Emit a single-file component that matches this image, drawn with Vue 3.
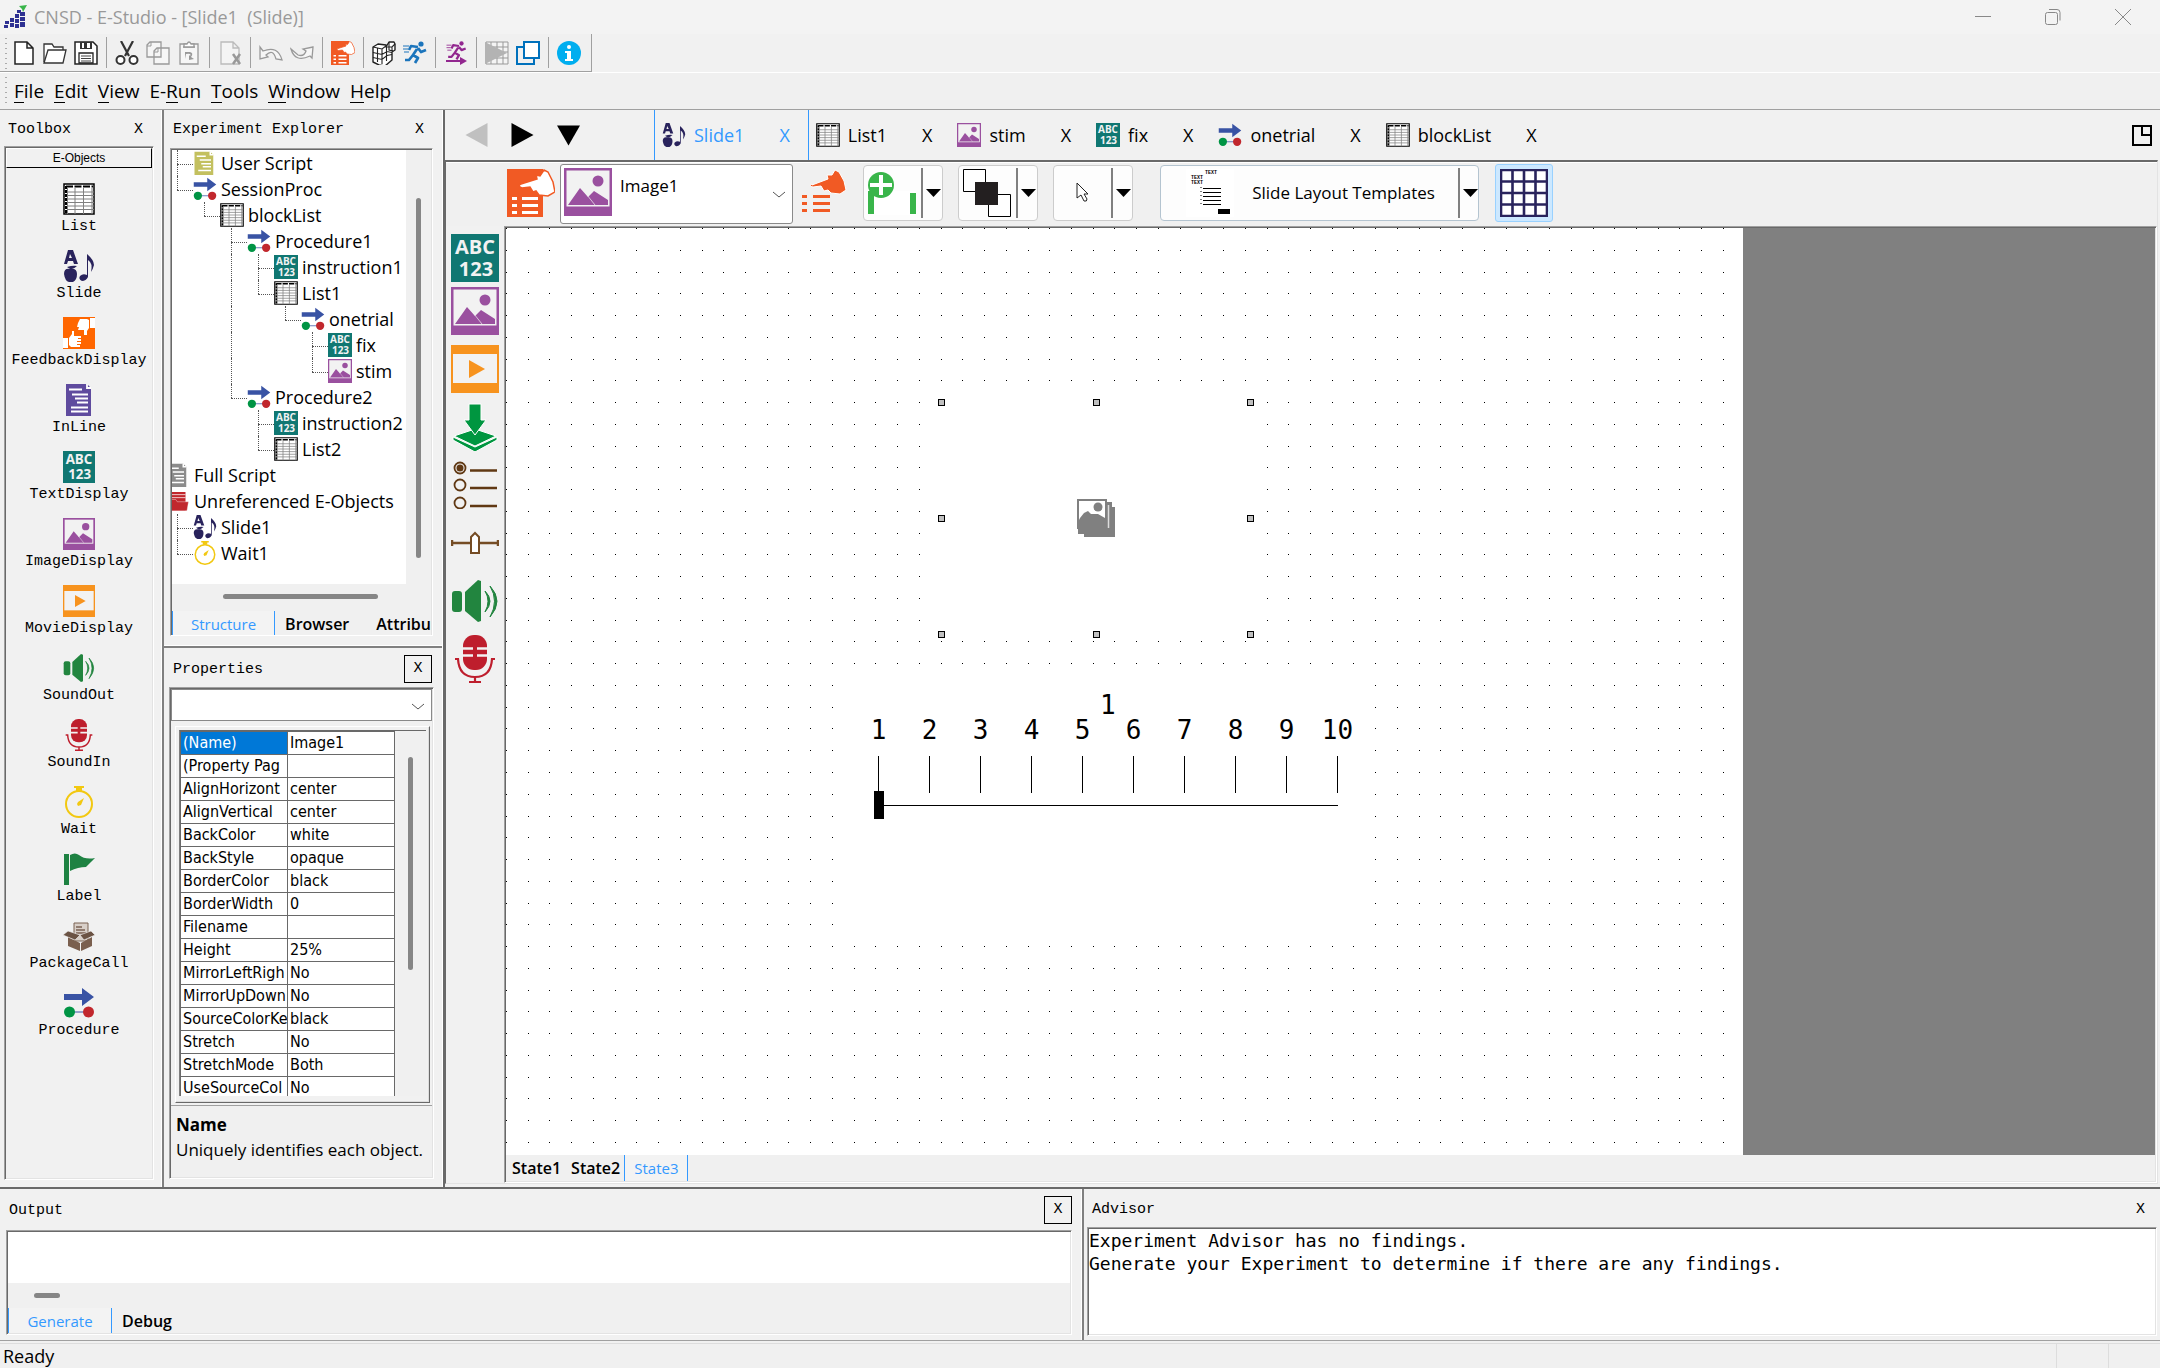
<script setup>
import { ref } from 'vue'

const toolGroups = [
  [['new', 'New'], ['open', 'Open'], ['save', 'Save']],
  [['cut', 'Cut'], ['copy', 'Copy'], ['paste', 'Paste']],
  [['delete', 'Delete']],
  [['undo', 'Undo'], ['redo', 'Redo']],
  [['props', 'Properties']],
  [['cubes', 'Generate'], ['run', 'Run']],
  [['runmode', 'Quick Run']],
  [['preview', 'Test'], ['windows', 'Windows']],
  [['info', 'About']]
]

const menus = [['', 'F', 'ile'], ['', 'E', 'dit'], ['', 'V', 'iew'], ['E-', 'R', 'un'], ['', 'T', 'ools'], ['', 'W', 'indow'], ['', 'H', 'elp']]

const toolbox = [
  ['list', 'List'], ['slide', 'Slide'], ['feedback', 'FeedbackDisplay'], ['inline', 'InLine'],
  ['text', 'TextDisplay'], ['image', 'ImageDisplay'], ['movie', 'MovieDisplay'], ['sound', 'SoundOut'],
  ['mic', 'SoundIn'], ['wait', 'Wait'], ['flag', 'Label'], ['package', 'PackageCall'], ['procedure', 'Procedure']
]

// guides: one letter per indent level (t = branch, l = last branch, v = line, - = blank)
const tree = [
  ['t', 'script', 'User Script'],
  ['l', 'procedure', 'SessionProc'],
  ['-l', 'list', 'blockList'],
  ['--t', 'procedure', 'Procedure1'],
  ['--vt', 'text', 'instruction1'],
  ['--vl', 'list', 'List1'],
  ['--v-l', 'procedure', 'onetrial'],
  ['--v--t', 'text', 'fix'],
  ['--v--l', 'image', 'stim'],
  ['--l', 'procedure', 'Procedure2'],
  ['---t', 'text', 'instruction2'],
  ['---l', 'list', 'List2'],
  ['', 'fullscript', 'Full Script'],
  ['', 'folder', 'Unreferenced E-Objects'],
  ['t', 'slide', 'Slide1'],
  ['l', 'wait', 'Wait1']
]

const properties = [
  ['(Name)', 'Image1'], ['(Property Pag', ''], ['AlignHorizont', 'center'], ['AlignVertical', 'center'],
  ['BackColor', 'white'], ['BackStyle', 'opaque'], ['BorderColor', 'black'], ['BorderWidth', '0'],
  ['Filename', ''], ['Height', '25%'], ['MirrorLeftRigh', 'No'], ['MirrorUpDown', 'No'],
  ['SourceColorKe', 'black'], ['Stretch', 'No'], ['StretchMode', 'Both'], ['UseSourceCol', 'No']
]

const tabs = [['slide', 'Slide1'], ['list', 'List1'], ['image', 'stim'], ['text', 'fix'], ['procedure', 'onetrial'], ['list', 'blockList']]
const subObjects = ['text', 'image', 'movie', 'button', 'choice', 'slider', 'sound', 'mic']
const handles = ['nw', 'n', 'ne', 'w', 'e', 'sw', 's', 'se']
const rating = ref(1)

let dots = ''
for (let r = 0; r < 70; r++) {
  for (let c = 0; c < 100; c++) {
    dots += `M${Math.round(c * 21.73)} ${Math.round(r * 21.76)}h1v1h-1z`
  }
}
</script>

<template>
  <svg class="sprite" aria-hidden="true">
    <symbol id="i-logo" viewBox="0 0 24 24">
      <g fill="#2e3192">
        <path d="M17 7h5v4h-5zM17 12h5v4h-5zM17 17h5v5h-5zM12 9h4v4h-4zM12 14h4v4h-4zM12 19h4v4h-4zM7 13h4v4H7zM7 18h4v4H7zM2 16h4v3H2zM1 20h4v3H1zM14 5h4v3h-4z" />
      </g>
      <path d="M16 1l8-1-4 7-1-3z" fill="#39b54a" />
    </symbol>
    <symbol id="i-new" viewBox="0 0 24 24"><path d="M3 1h12l6 6v16H3zM15 1v6h6" fill="#fff" stroke="#222" stroke-width="1.5" /></symbol>
    <symbol id="i-open" viewBox="0 0 24 24"><path d="M1 21V3h8l2 3h9v4" fill="#fff" stroke="#333" stroke-width="1.3" /><path d="M1 22L5 9h18l-3 13z" fill="#fff" stroke="#333" stroke-width="1.3" /></symbol>
    <symbol id="i-save" viewBox="0 0 24 24"><path d="M1 1h18l4 4v18H1z" fill="#fff" stroke="#222" stroke-width="1.5" /><path d="M6 1h12v7H6z" fill="#333" /><path d="M13 2h3v5h-3zM8 2h2v5H8z" fill="#fff" /><path d="M5 12h14v10H5z" fill="#fff" stroke="#222" stroke-width="1.3" /><path d="M7 15h10M7 17.500h10M7 20h10" stroke="#444" /></symbol>
    <symbol id="i-cut" viewBox="0 0 24 24"><path d="M6 0l8 15M18 0l-8 15" stroke="#333" stroke-width="2.2" /><g fill="#fff" stroke="#333" stroke-width="2"><circle cx="5.500" cy="19" r="4" /><circle cx="18.500" cy="19" r="4" /></g></symbol>
    <symbol id="i-copy" viewBox="0 0 24 24"><path d="M1 4l3-3h11v15H1zM8 10l3-3h12v16H8z" fill="#f6f6f6" stroke="#999" stroke-width="1.3" /><path d="M1 5h4V1M8 11h4V7" fill="none" stroke="#999" /></symbol>
    <symbol id="i-paste" viewBox="0 0 24 24"><path d="M3 3h18v20H3zM6 6h12" fill="#f6f6f6" stroke="#999" stroke-width="1.3" /><path d="M7 6V3h3q2-4 4 0h3v3z" fill="#fff" stroke="#999" stroke-width="1.3" /><path d="M8 18v-7h5q4 1 1 5l3 2-5 1 0-5 1 1q2-3-4-2z" fill="#999" /></symbol>
    <symbol id="i-delete" viewBox="0 0 24 24"><path d="M3 1h12l6 6v16H3zM15 1v6h6" fill="#f4f4f4" stroke="#bbb" stroke-width="1.3" /><path d="M15 13l7 10M22 13l-7 10" stroke="#999" stroke-width="2.500" /></symbol>
    <symbol id="i-undo" viewBox="0 0 24 24"><path d="M1 6v12l8-2-2-2q7-7 10 4l6 1Q19 4 4 10z" fill="#f6f6f6" stroke="#999" stroke-width="1.3" /></symbol>
    <symbol id="i-redo" viewBox="0 0 24 24"><path d="M23 6l-10 2 3 2q-2 6-8 4L1 8q4 14 19 7l2 2z" fill="#f6f6f6" stroke="#999" stroke-width="1.3" /></symbol>
    <symbol id="i-props" viewBox="0 0 48 48"><path d="M0 0h36v48H0z" fill="#f15a24" /><g fill="#fff"><path d="M5 28h5v3H5zM15 28h16v3H15zM5 35h5v3H5zM15 35h16v3H15zM5 42h5v3H5zM15 42h16v3H15z" /></g><path d="M14 15l16-5-1-4 4 1 4-6 4 2 5 10 2 10-7 4-9-1-3-4-3 1-3-5-8 1q-5-2-1-4z" fill="#fff" stroke="#f15a24" stroke-width="1.500" /></symbol>
    <symbol id="i-hand" viewBox="0 0 48 48"><path d="M0 26h5v3H0zM11 26h17v3H11zM0 33h5v3H0zM11 33h17v3H11zM0 40h5v3H0zM11 40h17v3H11z" fill="#f15a24" /><path d="M10 16l16-6-1-4 5 0 3-5 4 2 5 9 2 9-6 4-9-1-3-3-4 1-3-5-8 1q-5-1-1-3z" fill="#f15a24" stroke="#fff" /></symbol>
    <symbol id="i-cubes" viewBox="0 0 24 24"><path d="M1 6l5-3 8 1v2l3-5h5l1 2v6l-3 2v8l-7 6-6-1-6-3z" fill="#fff" stroke="#222" stroke-width="1.4" stroke-linejoin="round" /><path d="M1 6l9 2 4-3M10 8v15M5.500 7v14M1 11.500l9 2 5-3 5 1M1 16.500l9 2 5-4 5-1M14.500 6v14M17 1v8l4 1M15 6h5l3-3M20 6v4" fill="none" stroke="#222" stroke-width="1.100" /></symbol>
    <symbol id="i-runner" viewBox="0 0 24 24"><circle cx="18" cy="3" r="2.600" stroke="none" /><path d="M15 6L8 5 6 9M15 7l3 4 5-2M14 8l-4 6 5 3-3 5M10 14l-4 5H2" fill="none" stroke-width="2.700" stroke-linejoin="round" /><path d="M0 5h6M0 8h5M1 11h5" fill="none" stroke-width="1" /></symbol>
    <symbol id="i-run" viewBox="0 0 24 24"><use href="#i-runner" fill="#1c75bc" stroke="#1c75bc" /></symbol>
    <symbol id="i-runmode" viewBox="0 0 24 24"><use href="#i-runner" width="23" height="20" x="1" fill="#92278f" stroke="#92278f" /><path d="M2 19h14v-3l7 4-7 4v-3H2z" fill="#92278f" /></symbol>
    <symbol id="i-preview" viewBox="0 0 24 24"><path d="M1 1h22v22H1zM1 6h22M1 11h22M1 17h22M6 1v22M12 1v22M18 1v22" fill="#f4f4f4" stroke="#999" /><path d="M0 1l22 11L0 23z" fill="#b3b3b3" /></symbol>
    <symbol id="i-windows" viewBox="0 0 24 24"><path d="M8 6H1v17h17v-5" fill="none" stroke="#0071bc" stroke-width="2" /><path d="M8 1h15v16H8z" fill="#fff" stroke="#0071bc" stroke-width="2" /></symbol>
    <symbol id="i-info" viewBox="0 0 24 24"><circle cx="12" cy="12" r="12" fill="#00aeef" /><circle cx="12" cy="6" r="2" fill="#fff" /><path d="M8 10h6v8h2v2H8v-2h2v-6H8z" fill="#fff" /></symbol>

    <symbol id="i-list" viewBox="0 0 32 32"><path d="M1 1h30v30H1z" fill="#fff" stroke="#000" stroke-width="1.500" /><path d="M4 9h27M4 12.500h27M4 16h27M4 19.500h27M4 23h27M4 26.500h27M12 5v26M20.500 5v26M29 5v26M4.500 5v26" stroke="#808080" fill="none" /><path d="M3 3.500h27" stroke="#000" stroke-width="2" stroke-dasharray="7 1.500" /><path d="M3 3v27" stroke="#000" stroke-width="2" stroke-dasharray="3 1" /></symbol>
    <symbol id="i-slide" viewBox="0 0 32 32"><g fill="#29235c"><path d="M5 0h5l5 14h-4l-1-3H5l-1 3H1zM7 4L6 8h3z" fill-rule="evenodd" /><path d="M7 19q-6-1-6 5 1 7 5 8h4q4-2 4-8 0-6-7-5z" /><path d="M4 17q6-2 10-1-4 4-7 3z" /><path d="M24 4q7 6 7 11-1 4-3 7 2-9-3-12v17q-2 4-6 4-4-2-2-5 3-3 7-1z" /></g></symbol>
    <symbol id="i-feedback" viewBox="0 0 32 32"><path d="M0 0h32v32H0z" fill="#ff6600" /><g fill="#fff"><path d="M0 21h5v10H0zM6 21l3-4v-3h2v5h7v2h-3v1h3v2h-4v1h4v2h-4v1h3v2H8l-2-2zM27 1h5v10h-5zM26 11l-2 3v4h-3v-5h-6l1-3h-2l1-4 2-4h7l2 1z" /></g></symbol>
    <symbol id="i-inline" viewBox="0 0 32 32"><path d="M3 0h21l4 4v28H3z" fill="#5f4b9e" /><path d="M24 0v4h4M6 5.500h13M9 10.500h16M12 14.500h13M14 18.500h11M8 23.500h17M8 27.500h17" fill="none" stroke="#fff" stroke-width="1.800" /></symbol>
    <symbol id="i-script" viewBox="0 0 32 32"><path d="M2 1h21l4 4v27H2z" fill="#c3c05f" /><path d="M23 1v4h4M5 7h12M9 12h15M11 17h13M13 21h11M7 26h17" fill="none" stroke="#fff" stroke-width="2" /></symbol>
    <symbol id="i-fullscript" viewBox="0 0 32 32"><path d="M2 1h21l4 4v27H2z" fill="#8c8c8c" /><path d="M23 1v4h4M5 7h12M9 12h15M11 17h13M13 21h11M7 26h17" fill="none" stroke="#fff" stroke-width="2" /></symbol>
    <symbol id="i-folder" viewBox="0 0 32 32"><path d="M2 4h24v25H2z" fill="#c1272d" /><path d="M2 7.500h24M2 11.500h24" stroke="#fff" stroke-width="1" /><path d="M3 14h10l2 3h15l-2 12H3z" fill="#c1272d" stroke="#fff" stroke-width=".5" /></symbol>
    <symbol id="i-text" viewBox="0 0 48 48"><path d="M0 0h48v48H0z" fill="#107772" /><g fill="#f2f2f2" font-family="Open Sans, sans-serif" font-weight="700" font-size="20" text-anchor="middle"><text x="24" y="20">ABC</text><text x="25" y="42">123</text></g></symbol>
    <symbol id="i-image" viewBox="0 0 48 48"><path d="M0 0h48v48H0z" fill="#9a509f" /><path d="M2.500 2.500h43v36h-43z" fill="#f2f2f2" /><path d="M4 37l12-17 8 9 6-6 14 9v5z" fill="#9a509f" /><path d="M23 27l8 10" stroke="#f2f2f2" stroke-width=".7" /><circle cx="34" cy="13" r="5.500" fill="#9a509f" /></symbol>
    <symbol id="i-movie" viewBox="0 0 48 48"><path d="M0 0h48v48H0z" fill="#f7931e" /><path d="M2 9h44v29H2z" fill="#f2f2f2" /><path d="M18 15l16 9-16 9z" fill="#f7931e" /></symbol>
    <symbol id="i-button" viewBox="0 0 48 48"><g fill="#009640" stroke="#fff"><path d="M2 34v3l22 12 22-12v-3L24 44z" stroke-width="1" /><path d="M3 33l21-7 21 7-21 10z" /><path d="M18 1h12v16h5L24 32 13 17h5z" /></g></symbol>
    <symbol id="i-choice" viewBox="0 0 48 48"><g fill="none" stroke="#603813" stroke-width="1.800"><circle cx="9" cy="7" r="5.500" /><circle cx="9" cy="24" r="5.500" /><circle cx="9" cy="42" r="5.500" /><path d="M19 9.500h27M19 27h27M19 45h27" stroke-width="2.600" /></g><circle cx="9" cy="7" r="3.500" fill="#603813" /></symbol>
    <symbol id="i-slider" viewBox="0 0 48 48"><path d="M1 21v6M47 21v6M1 24h46" stroke="#754c24" stroke-width="2.500" /><path d="M20 18l4-4 4 4v16h-8z" fill="#fff" stroke="#754c24" stroke-width="2" /></symbol>
    <symbol id="i-sound" viewBox="0 0 48 48"><g fill="#22853f"><rect x="1" y="14" width="10" height="21" rx="3" /><path d="M14 15L27 3l3 1v40l-3 1-13-11z" /><path d="M34 14q10 10 0 21 6-11 0-21zM39 9q14 15 0 31 9-16 0-31z" stroke="#22853f" /></g></symbol>
    <symbol id="i-mic" viewBox="0 0 48 48"><rect x="12" y="0" width="24" height="35" rx="11" fill="#be1e2d" /><path d="M11 13.500h11M26 13.500h11M11 20.500h11M26 20.500h11" stroke="#f2f2f2" stroke-width="2.600" /><path d="M4 24h3q1 18 17 18t17-18h3M24 42v5M18 47h12" fill="none" stroke="#be1e2d" stroke-width="2.200" /></symbol>
    <symbol id="i-wait" viewBox="0 0 32 32"><circle cx="16" cy="18" r="13" fill="none" stroke="#f2c811" stroke-width="2" /><path d="M11 0h10v2h-2v3h-6V2h-2z" fill="#f2c811" /><path d="M21 12l-3 7-3 1-1-2 1-2z" fill="#f2c811" /></symbol>
    <symbol id="i-flag" viewBox="0 0 32 32"><path d="M1 1h5v31H1z" fill="#1e8242" /><path d="M7 2q5-3 9 0 6 5 16 3-6 6-9 9-8 0-16 4z" fill="#1e8242" /></symbol>
    <symbol id="i-package" viewBox="0 0 32 32"><path d="M11 3h14v18H11z" fill="#d8cfc8" stroke="#7a6253" /><path d="M13 7h6M13 10h9M13 13h10" stroke="#7a6253" stroke-width="1.300" /><path d="M5 17l12 6v8L5 26zM29 17l-11 6v8l11-5z" fill="#7a5f4e" /><path d="M5 11l-5 4 12 5 5-5zM28 11l4 4-11 5-4-5z" fill="#6b5344" stroke="#f2f2f2" stroke-width=".6" /></symbol>
    <symbol id="i-procedure" viewBox="0 0 32 32"><path d="M1 7h18V1l12 9-12 9v-6H1z" fill="#3953a4" /><path d="M8 25h16" stroke="#3953a4" /><circle cx="6.500" cy="25" r="5.500" fill="#009444" /><circle cx="25.500" cy="25" r="5.500" fill="#c1272d" /></symbol>
  </svg>

  <div class="app">
    <header class="titlebar">
      <svg class="logo"><use href="#i-logo" /></svg>
      <h1>CNSD - E-Studio - [Slide1&nbsp; (Slide)]</h1>
      <div class="winctl">
        <button aria-label="Minimize"><svg viewBox="0 0 16 16"><path d="M0 7.500h16" /></svg></button>
        <button aria-label="Restore"><svg viewBox="0 0 16 16"><rect x=".5" y="3.500" width="12" height="12" rx="2" /><path d="M4 .5h8q3 0 3 3v8" /></svg></button>
        <button aria-label="Close"><svg viewBox="0 0 16 16"><path d="M0 0l16 16M16 0L0 16" /></svg></button>
      </div>
    </header>

    <div class="toolbar">
      <i class="grip"></i>
      <div v-for="(g, n) in toolGroups" :key="n" class="group">
        <button v-for="[icon, name] in g" :key="icon" :aria-label="name"><svg><use :href="'#i-' + icon" /></svg></button>
      </div>
    </div>

    <nav class="menubar">
      <i class="grip"></i>
      <button v-for="m in menus" :key="m[1] + m[2]">{{ m[0] }}<u>{{ m[1] }}</u>{{ m[2] }}</button>
    </nav>

    <main class="workspace">
      <section class="dock toolbox">
        <div class="caption"><h2>Toolbox</h2><button aria-label="Close Toolbox">X</button></div>
        <div class="sunken toolbox-list">
          <button class="category">E-Objects</button>
          <button v-for="[icon, name] in toolbox" :key="name" class="eobject">
            <svg><use :href="'#i-' + icon" /></svg><span>{{ name }}</span>
          </button>
        </div>
      </section>

      <div class="dock-column">
        <section class="dock explorer">
          <div class="caption"><h2>Experiment Explorer</h2><button aria-label="Close Experiment Explorer">X</button></div>
          <div class="sunken explorer-box">
            <div class="tree-area">
              <ul class="tree">
                <li v-for="[guides, icon, label] in tree" :key="label">
                  <i v-for="(g, n) in guides" :key="n" class="guide" :class="'g-' + g"></i>
                  <svg><use :href="'#i-' + icon" /></svg><span>{{ label }}</span>
                </li>
              </ul>
              <div class="vscroll"><i></i></div>
            </div>
            <div class="hscroll"><i></i></div>
            <div class="bottom-tabs">
              <button class="active">Structure</button><button>Browser</button><button class="cut">Attribu</button>
            </div>
          </div>
        </section>

        <section class="dock properties">
          <div class="caption"><h2>Properties</h2><button class="boxed" aria-label="Close Properties">X</button></div>
          <div class="sunken prop-box">
            <div class="combo">
              <select aria-label="Object"><option></option></select>
              <svg viewBox="0 0 12 6"><path d="M0 0l6 5 6-5" /></svg>
            </div>
            <div class="raised">
              <div class="grid-wrap">
                <table>
                  <tbody>
                    <tr v-for="([k, v], n) in properties" :key="k">
                      <th scope="row" :class="{ sel: n === 0 }">{{ k }}</th><td>{{ v }}</td>
                    </tr>
                  </tbody>
                </table>
                <div class="vscroll"><i></i></div>
              </div>
            </div>
            <div class="help"><b>Name</b><p>Uniquely identifies each object.</p></div>
          </div>
        </section>
      </div>

      <section class="editor">
        <div class="tabbar">
          <div class="navs">
            <button aria-label="Previous tab"><svg viewBox="0 0 22 24"><path d="M0 12L22 0v24z" fill="#c0c0c0" /></svg></button>
            <button aria-label="Next tab"><svg viewBox="0 0 22 24"><path d="M22 12L0 0v24z" /></svg></button>
            <button aria-label="Tab list"><svg viewBox="0 0 24 24"><path d="M0 2h24L12 23z" /></svg></button>
          </div>
          <div v-for="([icon, name], n) in tabs" :key="name" class="tab" :class="{ active: n === 0 }">
            <svg><use :href="'#i-' + icon" /></svg><span>{{ name }}</span><button :aria-label="'Close ' + name">X</button>
          </div>
          <button class="tile" aria-label="Restore window"><svg viewBox="0 0 20 21"><path d="M1 1h18v19H1zM10 1v9h9" /></svg></button>
        </div>

        <div class="editor-body">
          <div class="slide-tools">
            <button class="flat" aria-label="Properties"><svg class="big"><use href="#i-props" /></svg></button>
            <div class="object-combo">
              <svg class="big"><use href="#i-image" /></svg>
              <select aria-label="Sub-object"><option>Image1</option></select>
              <svg class="chev" viewBox="0 0 12 6"><path d="M0 0l6 5 6-5" /></svg>
            </div>
            <button class="flat" aria-label="Sub-object properties"><svg class="big"><use href="#i-hand" /></svg></button>
            <button class="split" aria-label="Add state">
              <svg class="big" viewBox="0 0 48 48"><path d="M0 22h48v24H6V22" fill="#fff" /><path d="M0 22h6v23H0zM42 24h6v21h-6z" fill="#39b54a" /><circle cx="13" cy="16" r="13" fill="#39b54a" /><path d="M13 6v20M2 16h22" stroke="#fff" stroke-width="4" /></svg>
              <i></i><svg class="arrow" viewBox="0 0 15 8"><path d="M0 0h15L7.500 8z" /></svg>
            </button>
            <button class="split layers" aria-label="Order">
              <svg class="big" viewBox="0 0 48 48"><path d="M.5.500h22v22H.5zM25.500 25.500h22v22h-22z" fill="#fff" stroke="#000" /><path d="M12 13h23v23H12z" fill="#231f20" /></svg>
              <i></i><svg class="arrow" viewBox="0 0 15 8"><path d="M0 0h15L7.500 8z" /></svg>
            </button>
            <button class="split layers" aria-label="Select">
              <svg class="big" viewBox="0 0 48 48"><path d="M19 14v15l4-3 3 6q3 1 3-2l-3-5h4z" fill="#fff" stroke="#222" stroke-width="1" /></svg>
              <i></i><svg class="arrow" viewBox="0 0 15 8"><path d="M0 0h15L7.500 8z" /></svg>
            </button>
            <button class="split template">
              <svg class="big" viewBox="0 0 48 48"><path d="M0 0h48v48H0z" fill="#fff" /><g font-family="Liberation Mono, monospace" font-weight="700" font-size="5"><text x="19" y="5">TEXT</text><text x="5" y="10">TEXT</text><text x="5" y="15">TEXT</text></g><path d="M17 19.500h18M17 23.500h18M17 27.500h18M17 31.500h18M17 35.500h18" stroke="#000" stroke-width="1.200" /><path d="M15 18v19" stroke="#000" stroke-dasharray="1 3" /><path d="M32 40h12v5H32z" /></svg>
              <span>Slide Layout Templates</span>
              <i></i><svg class="arrow" viewBox="0 0 15 8"><path d="M0 0h15L7.500 8z" /></svg>
            </button>
            <button class="gridbtn" aria-label="Show grid">
              <svg class="big" viewBox="0 0 48 48"><path d="M1 1h46v46H1zM12.500 1v46M24 1v46M35.500 1v46M1 12.500h46M1 24h46M1 35.500h46" fill="#fff" stroke="#29235c" stroke-width="2.600" /></svg>
            </button>
          </div>

          <div class="stage">
            <div class="palette">
              <button v-for="o in subObjects" :key="o" :aria-label="'Add ' + o"><svg class="big"><use :href="'#i-' + o" /></svg></button>
            </div>
            <div class="sunken viewport">
              <div class="surface">
                <div class="slide">
                  <svg class="dots"><path :d="dots" /></svg>
                  <div class="image-object">
                    <svg viewBox="0 0 38 38"><path d="M0 0h30v3h5v5h3v30H7v-3H1v-5H0z" fill="#808080" /><path d="M2 2h26v17l-7-4h-7l-3-3-4 2-4 5-1 2z" fill="#fff" /><circle cx="21" cy="8" r="4.500" fill="#808080" /><path d="M31.500 6v23" stroke="#ddd" stroke-width="1.500" /></svg>
                    <i v-for="h in handles" :key="h" class="handle" :class="h"></i>
                  </div>
                  <div class="slider-object">
                    <output for="rating">{{ rating }}</output>
                    <div class="scale"><span v-for="k in 10" :key="k">{{ k }}</span></div>
                    <input id="rating" v-model="rating" type="range" min="1" max="10" aria-label="Rating" />
                  </div>
                </div>
              </div>
              <div class="state-tabs">
                <button>State1</button><button>State2</button><button class="active">State3</button>
              </div>
            </div>
          </div>
        </div>
      </section>
    </main>

    <div class="lower">
      <section class="output">
        <div class="caption"><h2>Output</h2><button class="boxed" aria-label="Close Output">X</button></div>
        <div class="sunken output-box">
          <div class="log"></div>
          <div class="hscroll"><i></i></div>
          <div class="bottom-tabs"><button class="active">Generate</button><button>Debug</button></div>
        </div>
      </section>
      <section class="advisor">
        <div class="caption"><h2>Advisor</h2><button aria-label="Close Advisor">X</button></div>
        <div class="sunken advisor-box"><p>Experiment Advisor has no findings.</p><p>Generate your Experiment to determine if there are any findings.</p></div>
      </section>
    </div>

    <footer class="status"><span>Ready</span><i></i><i></i></footer>
  </div>
</template>

<style>
body { margin: 0; background: #f1f1f1; }
</style>

<style scoped>
* { box-sizing: border-box; margin: 0; padding: 0; }
button, select { font: inherit; color: inherit; background: none; border: 0; }
button { display: flex; align-items: center; }
svg { display: block; flex: none; }
ul { list-style: none; }
.sprite { display: none; }
.app { min-height: 100vh; display: flex; flex-direction: column; background: #f1f1f1; color: #000; font: 18px/26px "Open Sans", "Noto Sans", sans-serif; overflow: hidden; }

.titlebar { height: 34px; display: flex; align-items: center; background: #f3f3f3; padding-left: 3px; }
.logo { width: 24px; height: 24px; }
.titlebar h1 { font-size: 18px; font-weight: 400; color: #999; margin-left: 7px; flex: 1; }
.winctl { display: flex; gap: 54px; padding-right: 29px; }
.winctl svg { width: 16px; height: 16px; fill: none; stroke: #888; overflow: visible; }

.toolbar { height: 38px; align-self: flex-start; display: flex; align-items: center; background: #f0f0f0; border-right: 1px solid #a0a0a0; border-bottom: 1px solid #a0a0a0; padding: 0 2px 0 3px; }
.toolbar svg { width: 24px; height: 24px; }
.grip { width: 6px; align-self: stretch; margin: 2px 0; background: radial-gradient(circle, #aaa 1px, transparent 1px) 0 0 / 6px 5px; }
.group { display: flex; gap: 7px; padding: 0 8px; height: 31px; align-items: center; border-left: 1px solid #a0a0a0; }
.grip + .group { border-left: 0; padding-left: 3px; }

.menubar { height: 38px; display: flex; align-items: center; gap: 10px; font-size: 19px; background: #f0f0f0; border-top: 1px solid #fff; border-bottom: 1px solid #a0a0a0; padding-left: 3px; }
.menubar .grip { margin-right: -5px; }
.menubar button { display: block; }
.menubar u { display: inline-block; line-height: 22px; text-decoration: none; border-bottom: 1px solid #000; }

.sunken { border: 1px solid; border-color: #a0a0a0 #fff #fff #a0a0a0; box-shadow: inset 1px 1px 0 #696969, inset -1px -1px 0 #e3e3e3; padding: 1px; }
.caption { height: 36px; flex: none; display: flex; align-items: center; justify-content: space-between; font: 15px/20px "Liberation Mono", monospace; padding: 3px 14px 0 8px; }
.caption h2 { font: inherit; }
.caption .boxed { border: 1px solid #000; width: 28px; height: 28px; justify-content: center; margin-right: -14px; }

.workspace { flex: 1; display: flex; border-bottom: 2px solid #696969; }
.toolbox { width: 162px; display: flex; flex-direction: column; padding: 0 7px 7px 4px; border-right: 1px solid #fff; }
.toolbox .caption { padding: 3px 11px 0 4px; }
.toolbox-list { flex: 1; display: flex; flex-direction: column; }
.category { height: 20px; margin-bottom: 15px; justify-content: center; font: 12px/16px "Liberation Sans", sans-serif; border: 1px solid; border-color: #fff #000 #000 #fff; }
.eobject { height: 67px; flex-direction: column; font: 15px/20px "Liberation Mono", monospace; }
.eobject svg { width: 32px; height: 32px; }
.eobject span { margin-top: 2px; }

.dock-column { width: 281px; display: flex; flex-direction: column; border-left: 2px solid #808080; border-right: 1px solid #fff; }
.explorer { padding: 0 9px 9px 6px; border-bottom: 1px solid #fff; }
.explorer .caption { height: 38px; padding: 1px 9px 0 3px; }
.explorer-box { height: 488px; overflow: hidden; }
.tree-area { display: flex; height: 434px; }
.tree { width: 234px; background: #fff; overflow: hidden; }
.tree li { display: flex; height: 26px; margin-left: -6px; white-space: nowrap; }
.tree svg { width: 24px; height: 24px; margin-top: 1px; }
.tree span { margin-left: 4px; }
.guide { flex: none; width: 27px; position: relative; }
.guide::before { content: ""; position: absolute; left: 11px; top: 0; bottom: 0; border-left: 1px dotted #555; }
.g--::before { display: none; }
.g-l::before { bottom: 12px; }
.g-t::after, .g-l::after { content: ""; position: absolute; left: 11px; right: 0; top: 14px; border-top: 1px dotted #555; }
.vscroll { flex: 1; background: #f0f0f0; }
.vscroll i { display: block; width: 5px; height: 360px; border-radius: 3px; background: #868686; margin: 48px 0 0 10px; }
.hscroll { height: 27px; padding: 10px 0 0 51px; background: #f0f0f0; }
.hscroll i { display: block; width: 155px; height: 5px; border-radius: 3px; background: #868686; }
.bottom-tabs { display: flex; height: 25px; font-size: 16px; line-height: 24px; overflow: hidden; background: #f0f0f0; }
.bottom-tabs button { padding: 0 10px; font-weight: 600; }
.bottom-tabs .cut { padding: 0 0 0 17px; }
.bottom-tabs .active { color: #3399ff; font-size: 15px; font-weight: 400; width: 108px; justify-content: center; background: #f3f3f3; border: solid #3399ff; border-width: 0 1px; }

.properties { flex: 1; display: flex; flex-direction: column; padding: 3px 8px 8px 5px; border-top: 2px solid #808080; }
.properties .caption { padding: 2px 14px 0 4px; }
.properties .boxed { margin: -2px -12px 0 0; }
.prop-box { flex: 1; display: flex; flex-direction: column; }
.combo { height: 32px; position: relative; background: #fff; border: 1px solid #8a8a8a; }
.combo select { appearance: none; width: 100%; height: 100%; }
.combo svg { position: absolute; right: 7px; top: 14px; width: 12px; height: 6px; fill: none; stroke: #555; overflow: visible; }
.raised { margin: 5px 2px 0 4px; height: 377px; padding: 3px; border: 1px solid; border-color: #fff #696969 #696969 #fff; box-shadow: inset -1px -1px 0 #ddd; }
.grid-wrap { display: flex; height: 366px; overflow: hidden; border-top: 1px solid #696969; border-left: 1px solid #808080; }
table { width: 215px; flex: none; table-layout: fixed; border-collapse: collapse; background: #fff; font: 16px/20px "DejaVu Sans Condensed", "Noto Sans", sans-serif; align-self: flex-start; }
tr { height: 23px; }
th, td { width: 50%; height: 23px; border: 1px solid #696969; padding: 0 2px; text-align: left; font-weight: 400; white-space: nowrap; overflow: hidden; }
th.sel { background: #0078d7; color: #fff; }
.grid-wrap .vscroll { margin-left: 3px; }
.grid-wrap .vscroll i { height: 213px; margin-top: 26px; }
.help { flex: 1; margin-top: 2px; padding: 6px 5px; border-top: 1px solid #a0a0a0; background: #f0f0f0; font-size: 17px; line-height: 25px; white-space: nowrap; }

.editor { flex: 1; min-width: 0; display: flex; flex-direction: column; border-left: 2px solid #696969; padding: 0 2px 3px 0; }
.tabbar { height: 50px; display: flex; }
.navs { width: 209px; padding-left: 20px; display: flex; gap: 23px; }
.navs svg { width: 23px; height: 24px; }
.tab { display: flex; align-items: center; padding: 0 18px 0 7px; }
.tab svg { width: 24px; height: 24px; }
.tab span { margin: 0 35px 0 8px; }
.tab.active { color: #3399ff; border: solid #3399ff; border-width: 0 1px; }
.tile { margin-left: auto; padding-right: 6px; }
.tile svg { width: 20px; height: 21px; fill: none; stroke: #000; stroke-width: 2; }
.editor-body { flex: 1; display: flex; flex-direction: column; border: solid; border-width: 2px 1px 1px 1px; border-color: #696969 #e3e3e3 #e3e3e3 #696969; background: #f0f0f0; }
.slide-tools { height: 64px; display: flex; align-items: flex-start; padding: 1px 0 0 61px; border-top: 1px solid #fff; }
.big { width: 48px; height: 48px; }
.slide-tools .flat { margin-top: 5px; }
.object-combo { position: relative; display: flex; width: 233px; height: 60px; background: #fff; border: 1px solid #8a8a8a; border-radius: 3px; margin: 0 9px 0 5px; padding: 3px; }
.object-combo select { flex: 1; appearance: none; font-size: 17px; padding: 0 0 16px 8px; }
.chev { position: absolute; right: 7px; top: 27px; width: 12px; height: 6px; fill: none; stroke: #555; overflow: visible; }
.split { height: 56px; width: 80px; background: #fdfdfd; border: 1px solid #ccc; border-radius: 4px; padding-left: 4px; margin: 1px 0 0 13px; }
.layers { margin-left: 15px; }
.split i { width: 2px; height: 50px; background: #808080; margin: 0 3px 0 5px; }
.arrow { width: 15px; height: 8px; }
.template { width: 319px; margin-left: 27px; padding-left: 25px; border-color: #b4c4d0; }
.template span { flex: 1; text-align: center; font-size: 17px; }
.gridbtn { width: 58px; height: 58px; justify-content: center; background: #cce8ff; border: 1px solid #99d1ff; border-radius: 3px; margin-left: 16px; }
.stage { flex: 1; display: flex; }
.palette { width: 58px; padding: 8px 0 0 5px; background: #f1f1f1; display: flex; flex-direction: column; gap: 10px; }
.palette button:first-child { margin-bottom: -5px; }
.viewport { flex: 1; display: flex; flex-direction: column; }
.surface { flex: 1; display: flex; background: #808080; }
.slide { position: relative; width: 75%; background: #fff; overflow: hidden; }
.dots { position: absolute; inset: 0; width: 100%; height: 100%; }
.image-object { position: absolute; left: 435px; top: 174px; width: 309px; height: 232px; background: #fff; display: flex; align-items: center; justify-content: center; }
.image-object svg { width: 38px; height: 38px; }
.handle { position: absolute; width: 7px; height: 7px; border: 1px solid #000; background: #c0c0c0; left: 0; top: 0; margin: -3px; }
.n, .s { left: 50%; }
.ne, .e, .se { left: 100%; }
.w, .e { top: 50%; }
.sw, .s, .se { top: 100%; }
.slider-object { position: absolute; left: 333px; top: 442px; width: 530px; height: 268px; padding: 22px 6px 0 14px; background: #fff; font: 26px/26px "DejaVu Sans Mono", monospace; }
.slider-object output { display: block; height: 25px; padding-left: 247px; }
.scale { display: flex; }
.scale span { flex: 1; text-align: center; height: 76px; background: linear-gradient(#000, #000) 50% 39px / 1px 37px no-repeat; }
.slider-object input { appearance: none; display: block; width: 468px; height: 28px; margin: -2px auto 0; background: linear-gradient(#000, #000) 50% 50% / 460px 1px no-repeat; }
.slider-object input::-webkit-slider-thumb { appearance: none; width: 10px; height: 28px; background: #000; }
.state-tabs { height: 26px; display: flex; font-size: 16px; background: #f0f0f0; }
.state-tabs button { padding: 0 4px 0 6px; font-weight: 600; }
.state-tabs .active { color: #3399ff; font-weight: 400; font-size: 15px; padding: 0 9px; background: #f3f3f3; border: solid #3399ff; border-width: 0 1px; }

.lower { height: 152px; display: flex; border-bottom: 1px solid #a0a0a0; }
.output { flex: 0 0 calc(50% + 2px); padding: 0 9px 5px 6px; display: flex; flex-direction: column; border-right: 1px solid #fff; }
.output .caption { height: 41px; padding: 2px 14px 0 3px; }
.output .boxed { margin: -2px -14px 0 0; }
.output-box { flex: 1; }
.log { height: 51px; background: #fff; }
.output-box .hscroll { height: 25px; padding-left: 26px; }
.output-box .hscroll i { width: 26px; }
.output-box .bottom-tabs .active { width: 104px; }
.advisor { flex: 1; padding: 0 3px 4px; display: flex; flex-direction: column; border-left: 2px solid #808080; }
.advisor .caption { height: 38px; padding: 4px 12px 0 5px; }
.advisor-box { flex: 1; background: #fff; font: 18px/23px "DejaVu Sans Mono", monospace; }
.status { height: 25px; display: flex; margin-top: 2px; padding-left: 3px; border-top: 1px solid #ddd; background: #f0f0f0; line-height: 24px; }
.status span { flex: 1; }
.status i { width: 52px; border-left: 1px solid #ddd; }
</style>
